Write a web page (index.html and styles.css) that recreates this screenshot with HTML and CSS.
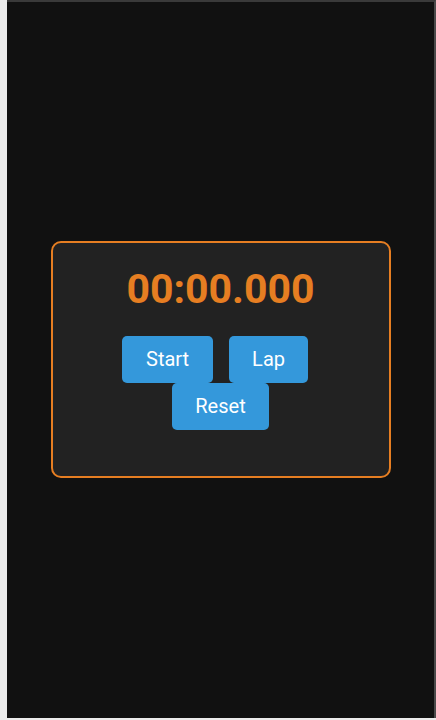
FILE: index.html
```html
<!DOCTYPE html>
<html lang="en">
<head>
<meta charset="utf-8">
<title>Stopwatch</title>
<link rel="stylesheet" href="styles.css">
</head>
<body>
<div class="stopwatch">
  <div class="display">00:00.000</div>
  <div class="controls">
    <button class="btn btn-start">Start</button>
    <button class="btn btn-lap">Lap</button>
    <button class="btn">Reset</button>
  </div>
</div>
</body>
</html>
```
FILE: styles.css
```css
html {
  background: #ececec;
}
body {
  margin: 0 0 2px 7px;
  height: 718px;
  box-sizing: border-box;
  background: #111111;
  border-top: 2px solid #3a3a3a;
  border-right: 2px solid #4a4a4a;
  display: flex;
  align-items: center;
  justify-content: center;
  font-family: Roboto, "Liberation Sans", sans-serif;
}
.stopwatch {
  width: 340px;
  box-sizing: border-box;
  margin-top: -1px;
  background: #222222;
  border: 2px solid #e67e22;
  border-radius: 10px;
  padding: 22px 20px 46px;
  text-align: center;
}
.display {
  font-size: 41px;
  font-weight: 700;
  color: #e67e22;
  margin-bottom: 23px;
}
.controls {
  display: flex;
  flex-wrap: wrap;
  justify-content: center;
  column-gap: 16px;
}
.btn {
  font-family: Roboto, "Liberation Sans", sans-serif;
  font-size: 20px;
  color: #ffffff;
  background: #3498db;
  border: none;
  border-radius: 5px;
  padding: 12px 23px;
  line-height: 23px;
}
.btn-start {
  padding: 12px 24px;
}
.btn-lap {
  margin-right: 11px;
}
```
